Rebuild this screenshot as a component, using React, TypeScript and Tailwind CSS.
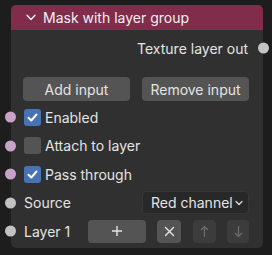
import React from "react";

const Socket = ({ color, side }: { color: string; side: "left" | "right" }) => (
  <span
    className={`absolute top-1/2 -translate-y-1/2 w-[11px] h-[11px] rounded-full ${color} ${
      side === "left" ? "left-[-6px]" : "right-[-6px]"
    }`}
  />
);

const Check = ({ on }: { on: boolean }) => (
  <span
    className={`w-[17px] h-[17px] rounded-[3px] flex items-center justify-center ${
      on ? "bg-[#4772b3]" : "bg-[#545454]"
    }`}
  >
    {on && (
      <svg width="13" height="13" viewBox="0 0 13 13" fill="none">
        <path d="M2.5 6.8 L5.3 9.5 L10.5 3.5" stroke="#fff" strokeWidth="2" strokeLinecap="round" strokeLinejoin="round" />
      </svg>
    )}
  </span>
);

const CheckRow = ({ label, on }: { label: string; on: boolean }) => (
  <div className="relative h-[28.5px] flex items-center gap-[4px] pl-[13px]">
    <Socket color="bg-[#c9a3c7]" side="left" />
    <Check on={on} />
    <span>{label}</span>
  </div>
);

export default function App() {
  return (
    <div
      className="w-[272px] h-[255px] bg-[#1d1d1d] pt-[5px] pl-[11px] text-[14px] text-[#e4e4e4]"
      style={{ fontFamily: "Inter, 'DejaVu Sans', sans-serif" }}
    >
      <div className="w-[252px] h-[243px] rounded-[5px] bg-[#303030] flex flex-col">
        {/* header */}
        <div className="h-[25px] rounded-t-[5px] bg-[#802c4a] flex items-center pl-[15px] gap-[7px] text-[#f0f0f0]">
          <svg width="10" height="7" viewBox="0 0 10 7" fill="none">
            <path d="M1 1.2 L5 5.5 L9 1.2" stroke="#eee" strokeWidth="1.4" strokeLinecap="round" strokeLinejoin="round" />
          </svg>
          <span>Mask with layer group</span>
        </div>

        {/* output */}
        <div className="relative h-[28px] mt-[4px] flex items-center justify-end pr-[15px]">
          <span>Texture layer out</span>
          <Socket color="bg-[#c4c4c4]" side="right" />
        </div>

        {/* buttons */}
        <div className="mt-[15px] h-[24px] flex gap-[12px] pl-[12px] pr-[14px]">
          <div className="flex-1 rounded-[4px] bg-[#545454] flex items-center justify-center">Add input</div>
          <div className="flex-1 rounded-[4px] bg-[#545454] flex items-center justify-center">Remove input</div>
        </div>

        <div className="mt-[2px]">
          <CheckRow label="Enabled" on />
          <CheckRow label="Attach to layer" on={false} />
          <CheckRow label="Pass through" on />

          {/* source */}
          <div className="relative h-[28.5px] flex items-center pl-[13px] pr-[14px]">
            <Socket color="bg-[#c2c2c2]" side="left" />
            <span className="flex-1">Source</span>
            <div className="w-[107px] h-[23px] rounded-[4px] bg-[#282828] border border-[#363636] flex items-center justify-between pl-[8px] pr-[5px]">
              <span>Red channel</span>
              <svg width="8" height="6" viewBox="0 0 8 6" fill="none">
                <path d="M1 1.5 L4 4.5 L7 1.5" stroke="#ddd" strokeWidth="1.3" strokeLinecap="round" strokeLinejoin="round" />
              </svg>
            </div>
          </div>

          {/* layer 1 */}
          <div className="relative h-[28.5px] flex items-center pl-[13px] pr-[14px]">
            <Socket color="bg-[#c2c2c2]" side="left" />
            <span className="w-[64px]">Layer 1</span>
            <div className="w-[58px] h-[23px] rounded-[4px] bg-[#545454] flex items-center justify-center">
              <svg width="12" height="12" viewBox="0 0 12 12" fill="none">
                <path d="M6 1 V11 M1 6 H11" stroke="#e6e6e6" strokeWidth="1.4" />
              </svg>
            </div>
            <div className="ml-[11px] w-[24px] h-[23px] rounded-[4px] bg-[#545454] flex items-center justify-center">
              <svg width="11" height="11" viewBox="0 0 11 11" fill="none">
                <path d="M1.5 1.5 L9.5 9.5 M9.5 1.5 L1.5 9.5" stroke="#e6e6e6" strokeWidth="1.4" strokeLinecap="round" />
              </svg>
            </div>
            <div className="ml-[12px] w-[23px] h-[23px] rounded-[4px] bg-[#3c3c3c] flex items-center justify-center">
              <svg width="9" height="13" viewBox="0 0 9 13" fill="none">
                <path d="M4.5 12 V1.5 M1 5 L4.5 1.5 L8 5" stroke="#6e6e6e" strokeWidth="1.2" />
              </svg>
            </div>
            <div className="ml-[11px] w-[22px] h-[23px] rounded-[4px] bg-[#3c3c3c] flex items-center justify-center">
              <svg width="9" height="13" viewBox="0 0 9 13" fill="none">
                <path d="M4.5 1 V11.5 M1 8 L4.5 11.5 L8 8" stroke="#6e6e6e" strokeWidth="1.2" />
              </svg>
            </div>
          </div>
        </div>
      </div>
    </div>
  );
}
